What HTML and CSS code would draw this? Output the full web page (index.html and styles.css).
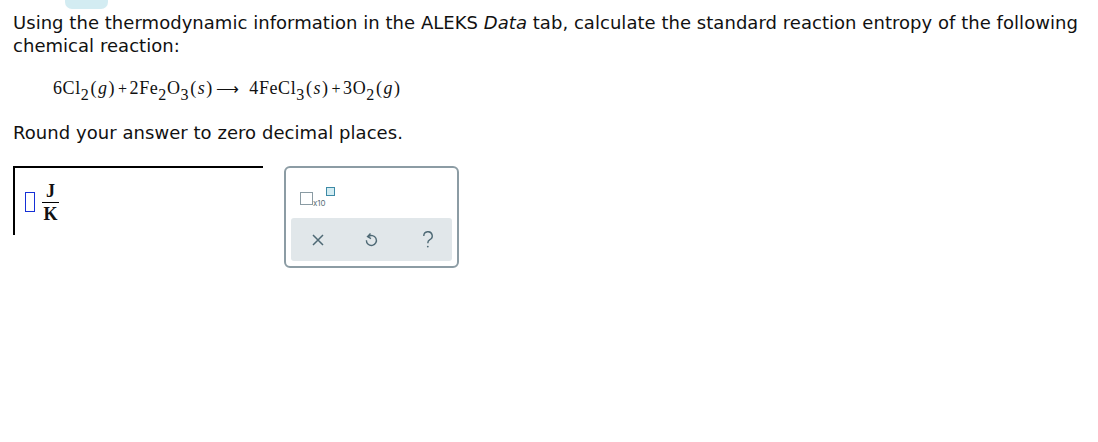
FILE: index.html
```html
<!DOCTYPE html>
<html>
<head>
<meta charset="utf-8">
<link rel="stylesheet" href="styles.css">
</head>
<body>
<div class="tab"></div>
<div class="content">
  <p class="q">Using the thermodynamic information in the ALEKS <i>Data</i> tab, calculate the standard reaction entropy of the following chemical reaction:</p>
  <div class="eq">6Cl<sub>2</sub><span class="ph">(<i>g</i>)</span><span class="op">+</span>2Fe<sub>2</sub>O<sub>3</sub><span class="ph">(<i>s</i>)</span><span class="arrow">⟶</span>4FeCl<sub>3</sub><span class="ph">(<i>s</i>)</span><span class="op">+</span>3O<sub>2</sub><span class="ph">(<i>g</i>)</span></div>
  <p class="round">Round your answer to zero decimal places.</p>
  <div class="work">
    <div class="answer">
      <span class="cursor"></span>
      <span class="frac"><span class="num">J</span><span class="den">K</span></span>
    </div>
    <div class="palette">
      <div class="tools">
        <span class="sq"></span><span class="x10">x10</span><span class="sup"></span>
      </div>
      <div class="actions">
        <svg class="i-x" width="14" height="14" viewBox="0 0 14 14"><path d="M2 2 L12 12 M12 2 L2 12" stroke="#4e6975" stroke-width="1.5" fill="none"/></svg>
        <svg class="i-undo" width="14" height="16" viewBox="0 0 14 16"><path d="M4.2 4.6 A5 5 0 1 1 2.4 8.2" stroke="#4e6975" stroke-width="1.4" fill="none"/><path d="M6.5 1.6 L3.6 4.7 L7 6.6" stroke="#4e6975" stroke-width="1.4" fill="none"/></svg>
        <svg class="i-help" width="12" height="18" viewBox="0 0 12 18"><path d="M1.8 5 A4.2 4.2 0 1 1 7.6 8.8 C6.2 9.6 5.8 10.4 5.8 12.2" stroke="#4e6975" stroke-width="1.4" fill="none"/><circle cx="5.8" cy="15.6" r="0.9" fill="#4e6975"/></svg>
      </div>
    </div>
  </div>
</div>
</body>
</html>
```
FILE: styles.css
```css
html, body { margin: 0; padding: 0; background: #fff; }
body { font-family: "DejaVu Sans", Verdana, sans-serif; color: #111; }
.tab { width: 43px; height: 9px; margin-left: 65px; background: #d3ecf2; border-radius: 0 0 7px 7px; }
.content { padding: 0 13px; }
.q { margin: 2px 0 0; font-size: 18px; line-height: 23px; width: 1075px; letter-spacing: 0.04px; }
.eq { font-family: "Liberation Serif", "Times New Roman", serif; font-size: 18px; margin: 18px 0 0 40px; height: 34px; line-height: 26px; letter-spacing: 0.6px; }
.eq sub { font-size: 16px; vertical-align: -6px; line-height: 0; }
.eq .ph { font-size: 18px; margin-left: 1px; letter-spacing: 1.5px; }
.eq .op { margin: 0 2px; font-size: 16px; }
.eq .arrow { margin: 0 10px 0 2px; font-size: 16px; }
.round { margin: 12px 0 0; font-size: 18px; line-height: 23px; letter-spacing: 0.05px; }
.work { display: flex; margin-top: 22px; gap: 20px; }
.answer { width: 250px; height: 69px; border-top: 2px solid #000; border-left: 2px solid #000; display: flex; align-items: flex-start; padding-left: 10px; box-sizing: border-box; }
.cursor { width: 8px; height: 18px; border: 1px solid #1630d6; margin-top: 24px; }
.frac { display: flex; flex-direction: column; align-items: center; margin-left: 7px; margin-top: 13px; font-family: "Liberation Serif", serif; font-weight: bold; font-size: 18px; }
.frac .num { border-bottom: 1px solid #000; padding: 0 2px; line-height: 21px; width: 13px; text-align: center; }
.frac .den { line-height: 22px; }
.palette { width: 175px; height: 102px; border: 2px solid #8c9ca4; border-radius: 6px; box-sizing: border-box; margin-left: 1px; display: flex; flex-direction: column; padding: 4px 5px 5px; }
.tools { height: 46px; display: flex; align-items: flex-start; padding-left: 9px; }
.sq { width: 11px; height: 11px; border: 1.5px solid #8a9ba3; margin-top: 20px; }
.x10 { font-family: "Inter", "DejaVu Sans", sans-serif; font-size: 8px; color: #5a6f79; margin-top: 26px; }
.sup { width: 7px; height: 7px; border: 1.5px solid #3d8aa6; background: #d3ecf2; margin-top: 15px; margin-left: 0; }
.actions { flex: 1; background: #e1e7ea; border-radius: 3px; display: flex; align-items: center; padding: 1px 0 0 20px; }
.i-undo { margin-left: 39px; }
.i-help { margin-left: 44px; }
```
